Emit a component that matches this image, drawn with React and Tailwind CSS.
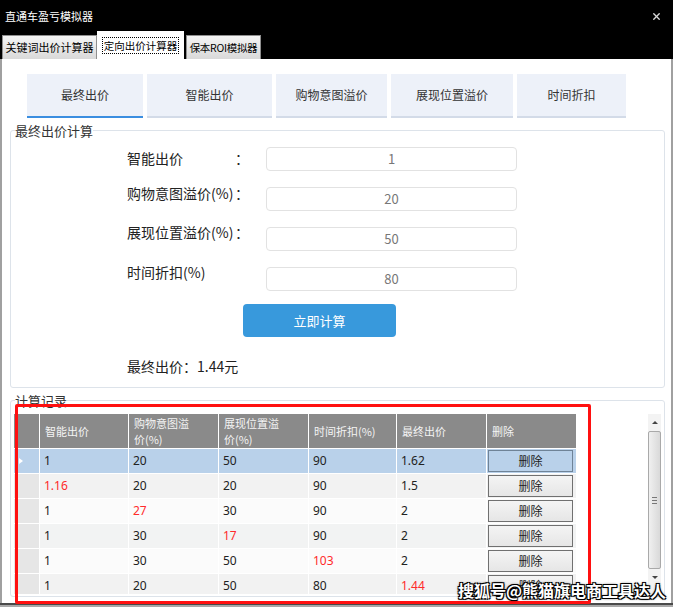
import React from 'react';
import { X } from 'lucide-react';

const subTabs = [
  { label: '最终出价', w: 'w-[116px]', active: true },
  { label: '智能出价', w: 'w-[125px]' },
  { label: '购物意图溢价', w: 'w-[111px]' },
  { label: '展现位置溢价', w: 'w-[122px]' },
  { label: '时间折扣', w: 'w-[109px]' },
];

const fields = [
  { label: '智能出价', colon: true, value: '1', shift: 'mt-[1px]' },
  { label: '购物意图溢价(%)', colon: true, value: '20', shift: 'mt-[-4px]' },
  { label: '展现位置溢价(%)', colon: true, value: '50', shift: 'mt-[-5px]' },
  { label: '时间折扣(%)', colon: false, value: '80', shift: 'mt-[-5px]' },
];

const rows = [
  { v: ['1', '20', '50', '90', '1.62'], red: -1, bg: 'bg-[#b9d1ea]', sel: true },
  { v: ['1.16', '20', '20', '90', '1.5'], red: 0, bg: 'bg-[#f2f2f2]' },
  { v: ['1', '27', '30', '90', '2'], red: 1, bg: 'bg-[#fbfbfb]' },
  { v: ['1', '30', '17', '90', '2'], red: 2, bg: 'bg-[#f2f3f3]' },
  { v: ['1', '30', '50', '103', '2'], red: 3, bg: 'bg-[#fbfbfb]' },
  { v: ['1', '20', '50', '80', '1.44'], red: 4, bg: 'bg-[#f2f2f2]' },
];

function HeadCell({ children }) {
  return (
    <div className="flex h-[34px] items-center bg-[#8a8a8a] px-[5px] text-[11px] leading-[16px] text-[#f4f4f4]">
      <span>{children}</span>
    </div>
  );
}

export default function App() {
  return (
    <div className="relative h-[607px] w-[673px] overflow-hidden bg-black font-['Noto_Sans_CJK_SC',sans-serif] text-[#222]">
      {/* title bar */}
      <div className="flex h-[31px] items-center justify-between pl-[5px] pr-[11px] pt-[2px]">
        <span className="text-[11px] text-white">直通车盈亏模拟器</span>
        <X size={11} strokeWidth={3} className="text-[#d8d8d8]" />
      </div>

      {/* window tabs */}
      <div className="flex h-[28px] items-end pl-[2px]">
        <div className="flex h-[24px] w-[95px] items-center justify-center whitespace-nowrap border border-b-0 border-[#8f8f8f] bg-linear-to-b from-[#f5f5f5] to-[#d9d9d9] text-[11px] text-black">
          关键词出价计算器
        </div>
        <div className="flex h-[28px] w-[87px] items-center justify-center whitespace-nowrap bg-white text-[10.5px] text-black">
          <span className="border border-dotted border-black px-[1px] leading-[15px]">定向出价计算器</span>
        </div>
        <div className="ml-[2px] flex h-[24px] w-[75px] items-center justify-center whitespace-nowrap border border-b-0 border-[#8f8f8f] bg-linear-to-b from-[#f5f5f5] to-[#d9d9d9] text-[10.5px] tracking-[-0.3px] text-black">
          保本ROI模拟器
        </div>
      </div>

      {/* content */}
      <div className="h-[544px] border-x-2 border-[#a0a0a0] bg-white">
        <div className="flex gap-[4px] pl-[25px] pt-[15px]">
          {subTabs.map((t) => (
            <div
              key={t.label}
              className={`flex h-[44px] items-center justify-center border-b-2 bg-[#edf1f9] text-[12px] text-[#333] ${t.w} ${
                t.active ? 'border-[#3b8ee0]' : 'border-[#d3dbe8]'
              }`}
            >
              {t.label}
            </div>
          ))}
        </div>

        <fieldset className="ml-[8px] mt-[4px] w-[655px] rounded-[3px] border border-[#dde3ea] pb-[11px]">
          <legend className="ml-[4px] text-[13px] leading-[17px] text-[#333]">最终出价计算</legend>
          <div className="pl-[116px] pt-[8px]">
            <div className="flex flex-col gap-[16px]">
              {fields.map((f) => (
                <div key={f.label} className="flex h-[24px] items-start">
                  <div className={`flex w-[139px] text-[14px] leading-[20px] text-[#222] ${f.shift}`}>
                    <span className="w-[108px] whitespace-nowrap">{f.label}</span>
                    {f.colon && <span>：</span>}
                  </div>
                  <div className="flex h-[24px] w-[251px] items-center justify-center rounded-[4px] border border-[#e2e2e2] text-[13px] text-[#777]">
                    {f.value}
                  </div>
                </div>
              ))}
            </div>
            <div className="ml-[116px] mt-[13px] flex h-[33px] w-[153px] items-center justify-center rounded-[4px] bg-[#3899dc] text-[13px] text-white">
              立即计算
            </div>
            <div className="mt-[19px] text-[14px] leading-[20px] text-[#222]">最终出价：1.44元</div>
          </div>
        </fieldset>

        <fieldset className="ml-[8px] mt-[4px] w-[655px] rounded-[3px] border border-[#dde3ea]">
          <legend className="ml-[4px] text-[13px] leading-[17px] text-[#333]">计算记录</legend>
          <div className="mb-[2px] ml-[3px] mr-[2px] mt-[4px] flex h-[181px] overflow-hidden bg-white pt-[1px]">
            <div className="grid h-fit w-[562px] grid-cols-[25px_88px_89px_89px_87px_89px_89px] gap-px bg-white">
              <div className="h-[34px] bg-[#8a8a8a]" />
              <HeadCell>智能出价</HeadCell>
              <HeadCell>
                购物意图溢
                <br />
                价(%)
              </HeadCell>
              <HeadCell>
                展现位置溢
                <br />
                价(%)
              </HeadCell>
              <HeadCell>时间折扣(%)</HeadCell>
              <HeadCell>最终出价</HeadCell>
              <HeadCell>删除</HeadCell>

              {rows.map((r, i) => (
                <React.Fragment key={i}>
                  <div className={`flex h-[24px] items-center pl-[5px] ${r.sel ? 'bg-[#b9d1ea]' : 'bg-[#e6e6e6]'}`}>
                    {r.sel && <div className="h-0 w-0 border-y-[3px] border-l-[4px] border-y-transparent border-l-white" />}
                  </div>
                  {r.v.map((v, j) => (
                    <div
                      key={j}
                      className={`flex h-[24px] items-center pl-[4px] font-['Noto_Sans',sans-serif] text-[12px] ${r.bg} ${
                        r.red === j ? 'text-[#ff2b2b]' : 'text-[#222]'
                      }`}
                    >
                      {v}
                    </div>
                  ))}
                  <div className={`flex h-[24px] items-center pl-[1px] ${r.bg}`}>
                    <div
                      className={`flex h-[22px] w-[85px] items-center justify-center border text-[12px] text-[#222] ${
                        r.sel
                          ? 'border-[#6f8397] bg-[#b9d1ea]'
                          : 'border-[#707070] bg-linear-to-b from-[#f4f4f4] to-[#e6e6e6]'
                      }`}
                    >
                      删除
                    </div>
                  </div>
                </React.Fragment>
              ))}
            </div>

            <div className="flex-1" />

            <div className="mr-[1px] flex w-[13px] flex-col bg-[#f3f3f3]">
              <div className="flex h-[17px] items-center justify-center">
                <div className="h-0 w-0 border-x-[3px] border-b-[3px] border-x-transparent border-b-[#444]" />
              </div>
              <div className="flex h-[138px] flex-col items-center justify-center gap-[2px] rounded-[2px] border border-[#a9a9a9] bg-linear-to-r from-[#f0f0f0] to-[#d9d9d9]">
                <div className="h-px w-[5px] bg-[#777]" />
                <div className="h-px w-[5px] bg-[#777]" />
                <div className="h-px w-[5px] bg-[#777]" />
              </div>
              <div className="flex h-[17px] items-center justify-center">
                <div className="h-0 w-0 border-x-[3px] border-t-[3px] border-x-transparent border-t-[#444]" />
              </div>
            </div>
          </div>
        </fieldset>
      </div>

      {/* bottom edge */}
      <div className="h-[4px] border-t-2 border-[#4a4a4a] bg-[#a8a8a8]" />

      {/* red annotation frame */}
      <div className="absolute left-[15px] top-[404px] h-[200px] w-[576px] rounded-[2px] border-[3px] border-[#ff1010]" />

      {/* watermark */}
      <div className="absolute left-[458px] top-[578px] text-[16px] font-bold leading-[24px] text-white [text-shadow:1px_1px_0_#000,-1px_-1px_0_#000,1px_-1px_0_#000,-1px_1px_0_#000,0_0_3px_#000]">
        搜狐号@熊猫旗电商工具达人
      </div>
    </div>
  );
}
